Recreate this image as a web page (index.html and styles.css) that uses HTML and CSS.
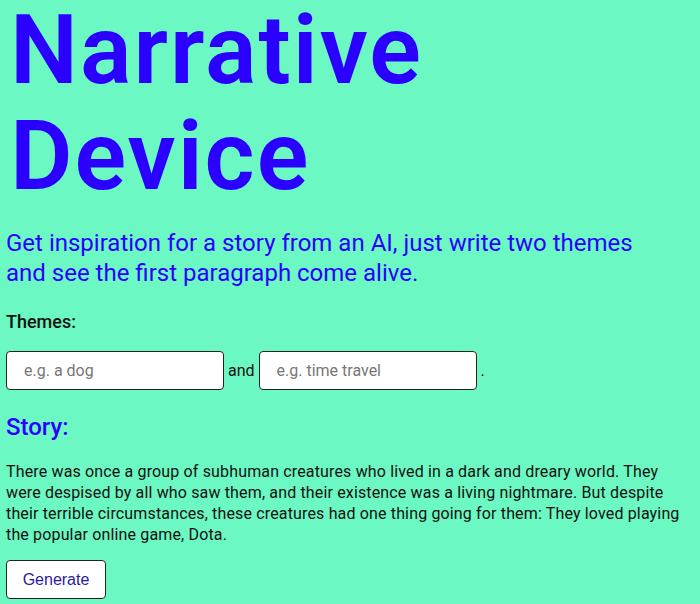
FILE: index.html
```html
<!DOCTYPE html>
<html lang="en">
<head>
    <meta charset="UTF-8">
    <meta name="viewport" content="width=device-width, initial-scale=1.0">
    <title>Narrative Device</title>
    <link rel="stylesheet" href="styles.css">
</head>
<body>
    <main class="page">
        <h1 class="title">Narrative Device</h1>
        <p class="lead">Get inspiration for a story from an AI, just write two themes and see the first paragraph come alive.</p>

        <label class="label" for="themeOne">Themes:</label>
        <div class="themes">
            <input type="text" id="themeOne" class="theme-input" placeholder="e.g. a dog">
            <span>and</span>
            <input type="text" id="themeTwo" class="theme-input" placeholder="e.g. time travel">
            <span>.</span>
        </div>

        <h2 class="story-title">Story:</h2>
        <p class="story">There was once a group of subhuman creatures who lived in a dark and dreary world. They were despised by all who saw them, and their existence was a living nightmare. But despite their terrible circumstances, these creatures had one thing going for them: They loved playing the popular online game, Dota.</p>

        <button class="generate">Generate</button>
    </main>
</body>
</html>
```

FILE: styles.css
```css
body {
    margin: 0;
    padding: 0 6px;
    background-color: #6bf8c2;
    font-family: Roboto, "Liberation Sans", sans-serif;
    color: #111;
}

.page {
    display: flex;
    flex-direction: column;
    align-items: flex-start;
}

.title {
    margin: -2px 0 0;
    padding-left: 4px;
    font-size: 96px;
    line-height: 1.1;
    font-weight: 600;
    letter-spacing: 2px;
    color: #2b00ff;
}

.lead {
    max-width: 650px;
    margin: 19px 0 0;
    font-size: 24px;
    line-height: 30px;
    color: #2b00ff;
}

.label {
    margin-top: 23px;
    font-size: 18px;
    line-height: 22px;
    font-weight: 500;
}

.themes {
    display: flex;
    align-items: center;
    gap: 4px;
    margin-top: 18px;
    font-size: 16px;
}

.theme-input {
    width: 218px;
    height: 39px;
    box-sizing: border-box;
    padding: 0 17px;
    border: 1px solid #222;
    border-radius: 4px;
    background: white;
    font-family: inherit;
    font-size: 16px;
}

.theme-input::placeholder {
    color: #777;
}

.story-title {
    margin: 22px 0 0;
    font-size: 24px;
    line-height: 30px;
    font-weight: 500;
    color: #2b00ff;
}

.story {
    margin: 19px 0 0;
    font-size: 16px;
    line-height: 21px;
    letter-spacing: 0.15px;
}

.generate {
    margin-top: 15px;
    width: 100px;
    height: 39px;
    background: white;
    border: 1px solid #222;
    border-radius: 4px;
    font-family: "Liberation Sans", Arial, sans-serif;
    font-size: 16px;
    color: #2a1a9e;
    cursor: pointer;
}
```
